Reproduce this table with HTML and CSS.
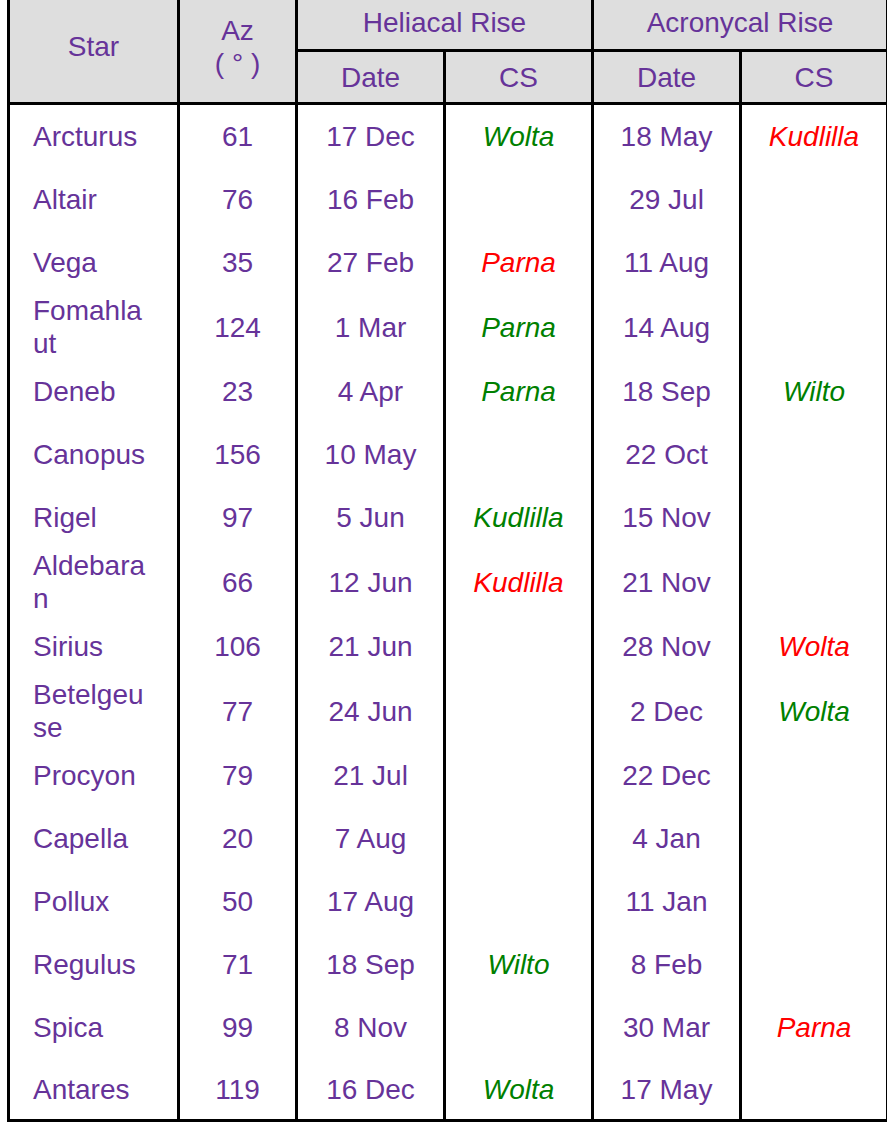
FILE: index.html
```html
<!DOCTYPE html>
<html lang="en">
<head>
<meta charset="utf-8">
<title>Star rising dates</title>
<link rel="stylesheet" href="styles.css">
</head>
<body>
<table class="stars">
  <colgroup>
    <col class="c-star">
    <col class="c-az">
    <col class="c-date">
    <col class="c-cs">
    <col class="c-date">
    <col class="c-cs2">
  </colgroup>
  <thead>
    <tr class="h1">
      <th rowspan="2" class="span first">Star</th>
      <th rowspan="2" class="span">Az<br>( ° )</th>
      <th colspan="2" class="group">Heliacal Rise</th>
      <th colspan="2" class="group">Acronycal Rise</th>
    </tr>
    <tr class="h2">
      <th>Date</th>
      <th>CS</th>
      <th>Date</th>
      <th>CS</th>
    </tr>
  </thead>
  <tbody>
    <tr><td class="name">Arcturus</td><td>61</td><td>17 Dec</td><td class="cs green">Wolta</td><td>18 May</td><td class="cs red">Kudlilla</td></tr>
    <tr><td class="name">Altair</td><td>76</td><td>16 Feb</td><td class="cs"></td><td>29 Jul</td><td class="cs"></td></tr>
    <tr><td class="name">Vega</td><td>35</td><td>27 Feb</td><td class="cs red">Parna</td><td>11 Aug</td><td class="cs"></td></tr>
    <tr class="tall"><td class="name">Fomahlaut</td><td>124</td><td>1 Mar</td><td class="cs green">Parna</td><td>14 Aug</td><td class="cs"></td></tr>
    <tr><td class="name">Deneb</td><td>23</td><td>4 Apr</td><td class="cs green">Parna</td><td>18 Sep</td><td class="cs green">Wilto</td></tr>
    <tr><td class="name">Canopus</td><td>156</td><td>10 May</td><td class="cs"></td><td>22 Oct</td><td class="cs"></td></tr>
    <tr><td class="name">Rigel</td><td>97</td><td>5 Jun</td><td class="cs green">Kudlilla</td><td>15 Nov</td><td class="cs"></td></tr>
    <tr class="tall"><td class="name">Aldebaran</td><td>66</td><td>12 Jun</td><td class="cs red">Kudlilla</td><td>21 Nov</td><td class="cs"></td></tr>
    <tr><td class="name">Sirius</td><td>106</td><td>21 Jun</td><td class="cs"></td><td>28 Nov</td><td class="cs red">Wolta</td></tr>
    <tr class="tall"><td class="name">Betelgeuse</td><td>77</td><td>24 Jun</td><td class="cs"></td><td>2 Dec</td><td class="cs green">Wolta</td></tr>
    <tr><td class="name">Procyon</td><td>79</td><td>21 Jul</td><td class="cs"></td><td>22 Dec</td><td class="cs"></td></tr>
    <tr><td class="name">Capella</td><td>20</td><td>7 Aug</td><td class="cs"></td><td>4 Jan</td><td class="cs"></td></tr>
    <tr><td class="name">Pollux</td><td>50</td><td>17 Aug</td><td class="cs"></td><td>11 Jan</td><td class="cs"></td></tr>
    <tr><td class="name">Regulus</td><td>71</td><td>18 Sep</td><td class="cs green">Wilto</td><td>8 Feb</td><td class="cs"></td></tr>
    <tr><td class="name">Spica</td><td>99</td><td>8 Nov</td><td class="cs"></td><td>30 Mar</td><td class="cs red">Parna</td></tr>
    <tr class="last"><td class="name">Antares</td><td>119</td><td>16 Dec</td><td class="cs green">Wolta</td><td>17 May</td><td class="cs"></td></tr>
  </tbody>
</table>
</body>
</html>
```
FILE: styles.css
```css
html, body {
  margin: 0;
  padding: 0;
  background: #ffffff;
  overflow: hidden;
}

.stars {
  margin-left: 7px;
  width: 882px;
  table-layout: fixed;
  border-collapse: separate;
  border-spacing: 0;
  font-family: "Liberation Sans", Arial, sans-serif;
  font-size: 28px;
  color: #663399;
}

.c-star { width: 173px; }
.c-az { width: 118px; }
.c-date { width: 148px; }
.c-cs { width: 148px; }
.c-cs2 { width: 147px; }

.stars th,
.stars td {
  box-sizing: border-box;
  padding: 0;
  border-right: 3px solid #000;
  text-align: center;
  vertical-align: middle;
  line-height: 33px;
}

.stars th {
  font-weight: normal;
  background: #dedede;
  border-bottom: 3px solid #000;
}

.stars .first,
.stars td.name {
  border-left: 3px solid #000;
}

.h1 { height: 52px; }
.h2 { height: 53px; }

.stars th.group {
  padding-bottom: 4px;
}

.stars th.span {
  padding-bottom: 9px;
}

.stars tbody tr { height: 63px; }
.stars tbody tr.tall { height: 66px; }

.stars td.name {
  text-align: left;
  padding-left: 23px;
  padding-right: 26px;
  word-break: break-all;
}

.stars tr.last td {
  border-bottom: 3px solid #000;
}

.cs { font-style: italic; }
.green { color: #008000; }
.red { color: #ff0000; }
```
